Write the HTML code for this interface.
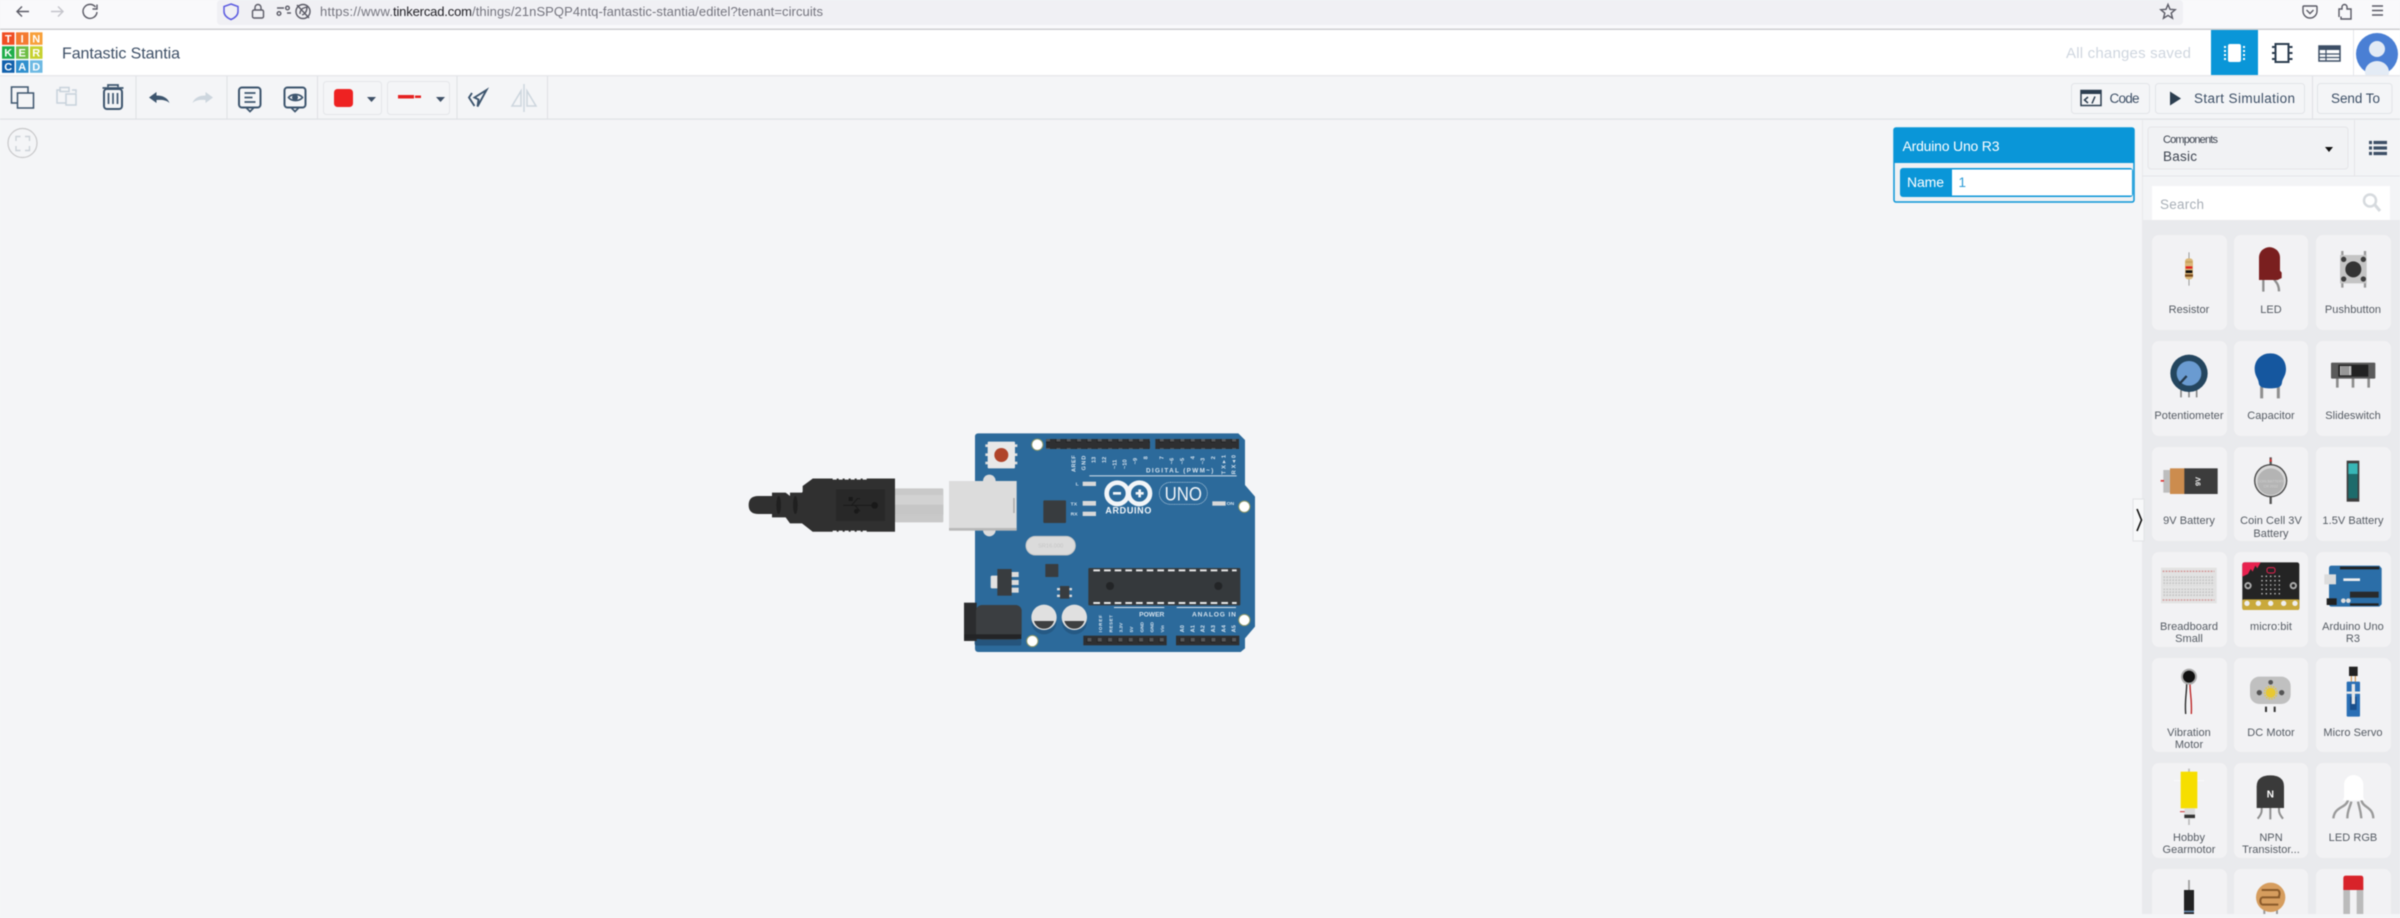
<!DOCTYPE html>
<html><head><meta charset="utf-8"><title>Fantastic Stantia</title>
<style>
html,body{margin:0;padding:0;width:2400px;height:918px;overflow:hidden;background:#f4f5f7}
svg{display:block;filter:blur(.4px)}
text{font-family:"Liberation Sans",sans-serif}
.l{font-size:11px;fill:#555b63;text-anchor:middle;letter-spacing:.05px}
.b{font-size:13.5px;fill:#3d4f66}
.pl{font-size:17px;fill:#d5e2ed;font-weight:bold}
</style></head><body>
<svg width="2400" height="918" viewBox="0 0 2400 918" xmlns="http://www.w3.org/2000/svg">
<defs>
<pattern id="pin" width="31" height="30" patternUnits="userSpaceOnUse"><rect width="31" height="30" fill="#2e2f31"/><rect x="9" y="9" width="13" height="12" fill="#565759"/><path d="M9 9v12h13" fill="none" stroke="#1b1b1c" stroke-width="2"/></pattern>
<pattern id="bb" width="9" height="9" patternUnits="userSpaceOnUse"><rect x="1" y="1" width="5" height="5" fill="#c4c4c4"/></pattern>
</defs>
<rect width="2400" height="918" fill="#f4f5f7"/>
<!-- browser chrome -->
<rect width="2400" height="29" fill="#f9f9fb"/>
<rect x="217" y="0" width="1966" height="25" rx="4" fill="#f0f0f4"/>
<rect y="28.5" width="2400" height="1.5" fill="#cfcfd2"/>
<g fill="none" stroke="#5b5b66" stroke-width="1.4">
<path d="M29 11.5H17M22 6.5l-5 5 5 5"/>
<path d="M63 11.5H51M58 6.5l5 5-5 5" stroke="#c4c4cb"/>
<path d="M95.5 7a7 7 0 1 0 1.500 5M97 4.500v4.500h-4.500"/>
<path d="M231 4l7 2.500v5c0 4-3.500 6.500-7 8-3.500-1.500-7-4-7-8v-5z" stroke="#5a5ae0" stroke-width="1.500"/>
<rect x="252.500" y="10" width="11" height="8" rx="1.500"/><path d="M255 10V7.500a3 3 0 0 1 6 0V10"/>
<path d="M277 8h7M287 13h4M277 13h-.01"/><circle cx="287.500" cy="8" r="1.800"/><circle cx="279" cy="13.500" r="1.800"/>
<circle cx="303" cy="11.500" r="7"/><path d="M297 5l12 13M300 14c0-5 3-6 7-7 0 5-2 7-5 8"/>
<path d="M2168 4.500l2 4.800 5.200.400-4 3.400 1.300 5.100-4.500-2.800-4.500 2.800 1.300-5.100-4-3.400 5.200-.400z"/>
<path d="M2304 6h12a1 1 0 0 1 1 1v4a7 7 0 0 1-14 0V7a1 1 0 0 1 1-1z"/><path d="M2306.500 10l3.500 3.500 3.500-3.500"/>
<path d="M2339 17v-8h3v-2a2.500 2.500 0 0 1 5 0v2h4v10h-10v-2.500"/>
<path d="M2372 6h11M2372 10.500h11M2372 15h11"/>
</g>
<text x="320" y="16" font-size="13" fill="#74747e" textLength="73">https://www.</text>
<text x="393" y="16" font-size="13" fill="#1f1e24" textLength="79">tinkercad.com</text>
<text x="472" y="16" font-size="13" fill="#74747e" textLength="351">/things/21nSPQP4ntq-fantastic-stantia/editel?tenant=circuits</text>

<!-- header -->
<rect y="30" width="2400" height="45" fill="#fff"/>
<rect y="75" width="2400" height="1.500" fill="#e8e9ec"/>
<g font-size="11" font-weight="bold" fill="#fff" text-anchor="middle">
<rect x="2" y="32.300" width="12.500" height="12.500" fill="#f04e23"/><text x="8.200" y="42.500">T</text>
<rect x="16" y="32.300" width="12.500" height="12.500" fill="#f47a30"/><text x="22.200" y="42.500">I</text>
<rect x="30" y="32.300" width="12.500" height="12.500" fill="#f8a03a"/><text x="36.200" y="42.500">N</text>
<rect x="2" y="46.300" width="12.500" height="12.500" fill="#1fae4b"/><text x="8.200" y="56.500">K</text>
<rect x="16" y="46.300" width="12.500" height="12.500" fill="#6ebd44"/><text x="22.200" y="56.500">E</text>
<rect x="30" y="46.300" width="12.500" height="12.500" fill="#c6d12f"/><text x="36.200" y="56.500">R</text>
<rect x="2" y="60.300" width="12.500" height="12.500" fill="#1261ac"/><text x="8.200" y="70.500">C</text>
<rect x="16" y="60.300" width="12.500" height="12.500" fill="#2f8fce"/><text x="22.200" y="70.500">A</text>
<rect x="30" y="60.300" width="12.500" height="12.500" fill="#6db9e3"/><text x="36.200" y="70.500">D</text>
</g>
<text x="62" y="58.500" font-size="16" fill="#3d4f66" textLength="118">Fantastic Stantia</text>
<text x="2066" y="58" font-size="15" fill="#cfd6df" textLength="125">All changes saved</text>
<rect x="2211" y="30" width="47" height="45" fill="#0a96d8"/>
<rect x="2228" y="44" width="13" height="18" rx="2" fill="#fff"/>
<path d="M2225 46v14M2244 46v14" stroke="#fff" stroke-width="2" stroke-dasharray="2 2"/>
<rect x="2275.500" y="44" width="13" height="18" fill="none" stroke="#2c3e50" stroke-width="2"/>
<path d="M2272 47h3.500M2272 53h3.500M2272 59h3.500M2289 47h3.500M2289 53h3.500M2289 59h3.500" stroke="#2c3e50" stroke-width="2"/>
<rect x="2319" y="46" width="21" height="15" fill="#fff" stroke="#3d4f66" stroke-width="1.500"/>
<rect x="2319" y="46" width="21" height="4" fill="#3d4f66"/>
<path d="M2319 54h21M2319 57.500h21M2326 50v11" stroke="#3d4f66" stroke-width="1.200"/>
<rect x="2353" y="30" width="1" height="45" fill="#e4e6ea"/>
<clipPath id="av"><rect x="2354" y="30" width="46" height="45"/></clipPath>
<g clip-path="url(#av)"><circle cx="2377" cy="54" r="21" fill="#4a7fd4"/><circle cx="2377" cy="49" r="8" fill="#e3ebf5"/><ellipse cx="2377" cy="72" rx="12" ry="11" fill="#e3ebf5"/></g>

<!-- toolbar -->
<rect y="118.500" width="2400" height="1.200" fill="#dfe1e5"/>
<g fill="#dfe1e5"><rect x="135.500" y="76" width="1" height="43"/><rect x="226.500" y="76" width="1" height="43"/><rect x="317" y="76" width="1" height="43"/><rect x="456.500" y="76" width="1" height="43"/><rect x="547" y="76" width="1" height="43"/><rect x="2312" y="76" width="1" height="43"/></g>
<g fill="none" stroke="#3d556e" stroke-width="1.500">
<path d="M17 103h-5.500V87H28v6"/><rect x="17.500" y="93" width="16" height="15"/>
<g stroke="#c8d2db"><path d="M66 103H57V90h4M72 90h4v3"/><rect x="60" y="87.500" width="9" height="4"/><rect x="66" y="94" width="10" height="11"/></g>
<rect x="104" y="89" width="18" height="20" rx="3" stroke-width="2"/><path d="M102.500 88h21M108 87v-2h10v2M108.500 93v11M113 93v11M117.500 93v11" stroke-width="1.700"/>
<rect x="239" y="87.500" width="21.500" height="20" rx="3" stroke-width="2"/><path d="M246 107.500l4 4 4-4M244.500 93h11M244.500 97.500h8M244.500 102h11" stroke-width="1.700"/>
<rect x="284.500" y="87.500" width="21" height="20" rx="3" stroke-width="2"/><path d="M291 107.500l4 4 4-4" stroke-width="1.700"/>
<path d="M288.500 97.500c3-4 11-4 14 0-3 4-11 4-14 0z" stroke-width="1.700"/>
<path d="M486.500 90L474.500 97.500 478.500 99.500 477.500 106.500Z" stroke-width="1.900"/>
<path d="M472 93l-3 4.500 5.500 8.500" stroke-width="1.900"/>
<g stroke="#cdd6de"><path d="M524 84v28"/><path d="M521 91v15h-9zM527 91v15h9z"/></g>
</g>
<circle cx="295" cy="97.500" r="3" fill="#3d556e"/>
<path d="M149 97.500l7.500-5.500v3.500c6 0 11 2 13 7.500-3-3-8-3.500-13-3v3z" fill="#3d556e"/>
<path d="M213 97.500l-7.500-5.500v3.500c-6 0-11 2-13 7.500 3-3 8-3.500 13-3v3z" fill="#cdd6de"/>
<rect x="323.500" y="81.500" width="58" height="33" rx="3" fill="#f4f5f7" stroke="#e4e6e9"/>
<rect x="387.500" y="81.500" width="62" height="33" rx="3" fill="#f4f5f7" stroke="#e4e6e9"/>
<rect x="334" y="89" width="19" height="18" rx="3.500" fill="#ee2222"/>
<path d="M367 97h9l-4.500 5zM436 97h9l-4.500 5z" fill="#3d4f66"/>
<rect x="398" y="95" width="16" height="3.500" fill="#e52222"/><rect x="415" y="95.500" width="6" height="2.500" fill="#e52222"/>
<g fill="#f4f5f7" stroke="#e2e4e8"><rect x="2071.500" y="83.500" width="78" height="30" rx="3"/><rect x="2155.500" y="83.500" width="149" height="30" rx="3"/><rect x="2317.500" y="83.500" width="74.500" height="30" rx="3"/></g>
<rect x="2081" y="90.500" width="20" height="15" fill="none" stroke="#2c3e50" stroke-width="1.500"/><rect x="2081" y="90" width="20" height="4" fill="#2c3e50"/>
<path d="M2088 97l-3.500 3 3.500 3M2095 96.500l-3 7" fill="none" stroke="#2c3e50" stroke-width="1.500"/>
<text x="2109.500" y="103" class="b" textLength="30">Code</text>
<path d="M2170 91.500l11 7-11 7z" fill="#2c3e50"/>
<text x="2194" y="103" class="b" textLength="101">Start Simulation</text>
<text x="2331" y="103" class="b" textLength="49">Send To</text>

<!-- fit button -->
<circle cx="22.500" cy="143" r="14.500" fill="#f4f5f7" stroke="#c8c8ca" stroke-width="1.200"/>
<path d="M16 141v-4.500h4.500M25 136.500h4.500v4.500M29.500 146v4.500H25M20.500 150.500H16V146" fill="none" stroke="#ccd2d8" stroke-width="1.400"/>

<!-- Board -->
<g transform="translate(960 425) scale(.33333)">
<path d="M55 25H835L855 45V180L885 215V605L855 640V670L842 681H55Q45 681 45 671V35Q45 25 55 25Z" fill="#2c6a9b"/>
<rect x="258" y="42" width="312" height="30" fill="url(#pin)"/>
<rect x="586" y="42" width="251" height="30" fill="url(#pin)"/>
<rect x="370" y="632" width="250" height="29" fill="url(#pin)"/>
<rect x="648" y="632" width="190" height="29" fill="url(#pin)"/>
<g fill="#fff" stroke="#8a9566" stroke-width="3"><circle cx="232" cy="59" r="17"/><circle cx="853" cy="245" r="17"/><circle cx="853" cy="585" r="17"/><circle cx="217" cy="648" r="17"/></g>
<rect x="76" y="58" width="96" height="8" fill="#ddd"/><rect x="76" y="85" width="96" height="8" fill="#ddd"/><rect x="76" y="110" width="96" height="8" fill="#ddd"/>
<rect x="83" y="50" width="82" height="80" rx="3" fill="#e8e8e8"/><circle cx="124" cy="90" r="21" fill="#b0442a"/>
<g fill="#d9d9d9"><rect x="368" y="170" width="40" height="13"/><rect x="368" y="228" width="40" height="14"/><rect x="368" y="260" width="40" height="13"/><rect x="757" y="229" width="40" height="13"/></g>
<g font-size="15" font-weight="bold" fill="#d5e2ed"><text x="347" y="182">L</text><text x="332" y="241">TX</text><text x="332" y="272">RX</text><text x="800" y="240">ON</text></g>
<rect x="250" y="226" width="68" height="68" rx="3" fill="#383c3f"/>
<rect x="198" y="334" width="148" height="56" rx="28" fill="#dbdbdb" stroke="#c6c6c6" stroke-width="3"/>
<text x="272" y="368" font-size="17" fill="#c4c4c4" text-anchor="middle">SR16.000</text>
<rect x="256" y="417" width="39" height="39" rx="2" fill="#383c3f"/>
<rect x="92" y="452" width="24" height="38" rx="4" fill="#e2e2e2"/>
<g fill="#dcdcdc"><rect x="152" y="441" width="24" height="15"/><rect x="152" y="465" width="24" height="15"/><rect x="152" y="488" width="24" height="15"/></g>
<rect x="112" y="432" width="43" height="80" fill="#383c3f"/>
<g fill="#dcdcdc"><rect x="291" y="489" width="10" height="7"/><rect x="291" y="509" width="10" height="7"/><rect x="326" y="489" width="10" height="7"/><rect x="326" y="509" width="10" height="7"/></g>
<rect x="300" y="483" width="28" height="38" fill="#383c3f"/>
<rect x="385" y="429" width="456" height="112" rx="3" fill="#35393c"/>
<path d="M400 436H830M400 534H830" stroke="#e8e8e8" stroke-width="6" stroke-dasharray="20 12"/>
<circle cx="450" cy="483" r="12" fill="#232527"/><circle cx="775" cy="483" r="12" fill="#232527"/>
<!-- logo -->
<circle cx="472" cy="205" r="32" fill="none" stroke="#f2f5f8" stroke-width="14"/><circle cx="538" cy="205" r="32" fill="none" stroke="#f2f5f8" stroke-width="14"/>
<rect x="459" y="201" width="24" height="8" fill="#f2f5f8"/><path d="M527 205h24M539 193v24" stroke="#f2f5f8" stroke-width="8"/>
<text x="505" y="266" font-size="27" font-weight="bold" fill="#f2f5f8" text-anchor="middle" textLength="138">ARDUINO</text>
<rect x="598" y="172" width="144" height="66" rx="33" fill="none" stroke="#d5e2ed" stroke-width="2" stroke-dasharray="3 2"/>
<text x="670" y="226" font-size="58" fill="#f0f4f8" text-anchor="middle" textLength="112" lengthAdjust="spacingAndGlyphs">UNO</text>
<!-- labels -->
<g class="pl">
<text class="pl" transform="translate(346 141) rotate(-90)" textLength="50">AREF</text>
<text class="pl" transform="translate(376 136) rotate(-90)" textLength="44">GND</text>
<text class="pl" transform="translate(407 114) rotate(-90)">13</text>
<text class="pl" transform="translate(438 114) rotate(-90)">12</text>
<text class="pl" transform="translate(469 132) rotate(-90)">~11</text>
<text class="pl" transform="translate(500 132) rotate(-90)">~10</text>
<text class="pl" transform="translate(531 118) rotate(-90)">~9</text>
<text class="pl" transform="translate(562 103) rotate(-90)">8</text>
<text class="pl" transform="translate(610 103) rotate(-90)">7</text>
<text class="pl" transform="translate(641 118) rotate(-90)">~6</text>
<text class="pl" transform="translate(672 118) rotate(-90)">~5</text>
<text class="pl" transform="translate(703 103) rotate(-90)">4</text>
<text class="pl" transform="translate(734 118) rotate(-90)">~3</text>
<text class="pl" transform="translate(765 103) rotate(-90)">2</text>
<text class="pl" transform="translate(796 148) rotate(-90)" textLength="58">TX▸1</text>
<text class="pl" transform="translate(827 148) rotate(-90)" textLength="58">RX◂0</text>
<text class="pl" transform="translate(426 622) rotate(-90)" style="font-size:14px" textLength="52">IOREF</text>
<text class="pl" transform="translate(457 622) rotate(-90)" style="font-size:14px" textLength="52">RESET</text>
<text class="pl" transform="translate(488 622) rotate(-90)" style="font-size:14px">3.3V</text>
<text class="pl" transform="translate(519 622) rotate(-90)" style="font-size:14px">5V</text>
<text class="pl" transform="translate(550 622) rotate(-90)" style="font-size:14px">GND</text>
<text class="pl" transform="translate(581 622) rotate(-90)" style="font-size:14px">GND</text>
<text class="pl" transform="translate(612 622) rotate(-90)" style="font-size:14px">Vin</text>
<text class="pl" transform="translate(672 622) rotate(-90)">A0</text>
<text class="pl" transform="translate(703 622) rotate(-90)">A1</text>
<text class="pl" transform="translate(734 622) rotate(-90)">A2</text>
<text class="pl" transform="translate(765 622) rotate(-90)">A3</text>
<text class="pl" transform="translate(796 622) rotate(-90)">A4</text>
<text class="pl" transform="translate(827 622) rotate(-90)">A5</text>
</g>
<text x="558" y="142" class="pl" style="font-size:19px" textLength="202">DIGITAL (PWM~)</text>
<rect x="388" y="151" width="442" height="3" fill="#d5e2ed"/>
<rect x="462" y="546" width="151" height="3" fill="#d5e2ed"/><rect x="650" y="546" width="178" height="3" fill="#d5e2ed"/>
<text x="613" y="574" class="pl" style="font-size:20px" text-anchor="end">POWER</text>
<text x="828" y="574" class="pl" style="font-size:20px" text-anchor="end" textLength="132">ANALOG IN</text>
<!-- caps -->
<circle cx="252" cy="590" r="38" fill="#22537a" opacity=".7"/><circle cx="343" cy="590" r="38" fill="#22537a" opacity=".7"/>
<circle cx="252" cy="577" r="38" fill="#e0e0e0"/><circle cx="343" cy="577" r="38" fill="#e0e0e0"/>
<path d="M222 588H282A31 31 0 0 1 222 588ZM313 588H373A31 31 0 0 1 313 588Z" fill="#3d3f41"/>
<!-- jack -->
<rect x="44" y="600" width="140" height="62" rx="6" fill="#25547c"/>
<rect x="12" y="533" width="38" height="115" fill="#2b2c2e"/>
<rect x="48" y="540" width="137" height="104" rx="18" fill="#3b3e41"/>
<rect x="12" y="628" width="172" height="14" fill="#232426"/>
<!-- USB block -->
<circle cx="88" cy="168" r="19" fill="#dcdcdc"/><circle cx="88" cy="315" r="19" fill="#dcdcdc"/>
<rect x="-33" y="168" width="203" height="146" fill="#dcdcdc"/>
<rect x="-33" y="313" width="203" height="4" fill="#b8b8b8"/>
<rect x="160" y="220" width="4" height="44" fill="#a5a5a5"/>
</g>
<g transform="translate(740 470) scale(.33333)">
<rect x="465" y="55" width="145" height="102" rx="3" fill="#c9c9c9"/>
<rect x="465" y="75" width="145" height="30" fill="#d2d2d2"/>
<rect x="465" y="104" width="145" height="30" fill="#c6c6c6"/>
<path d="M26 105Q26 78 55 78H96V68H137L150 78V68H186L218 26H275V26H465V185H218L186 160H150L137 142H96V132H55Q26 132 26 105Z" fill="#303030"/>
<path d="M188 48L218 26H465V185H218L188 160Z" fill="#303030"/>
<path d="M278 26h12M296 26h12M314 26h12M332 26h12M350 26h12M368 26h12M278 185h12M296 185h12M314 185h12M332 185h12M350 185h12M368 185h12" stroke="#f4f5f7" stroke-width="6"/>
<rect x="288" y="58" width="147" height="95" fill="#282828"/>
<ellipse cx="116" cy="105" rx="7" ry="27" fill="#202020"/><ellipse cx="166" cy="105" rx="7" ry="27" fill="#202020"/>
<path d="M310 106H405M335 106L352 86H360M345 106L360 124" fill="none" stroke="#191919" stroke-width="3"/>
<circle cx="404" cy="106" r="10" fill="#191919"/><rect x="326" y="81" width="12" height="12" fill="#191919"/><circle cx="349" cy="124" r="7" fill="#191919"/>
</g>
<rect x="949" y="481" width="67.500" height="48" fill="#dcdcdc"/>
<rect x="949" y="528" width="67.500" height="2" fill="#b8b8b8"/>
<rect x="1013.300" y="498" width="1.300" height="15" fill="#a5a5a5"/>

<!-- Inspector -->
<rect x="1894" y="128" width="240" height="74" rx="2" fill="#f0f1f3" stroke="#0a96d8" stroke-width="1.500"/>
<path d="M1894 163V130a2 2 0 0 1 2-2h236a2 2 0 0 1 2 2v33z" fill="#0a96d8"/>
<rect x="1900" y="168" width="233" height="29" rx="3" fill="#0a96d8"/>
<rect x="1952" y="169.500" width="180" height="26" fill="#fff"/>
<text x="1902.500" y="151" font-size="14" fill="#fff" textLength="97">Arduino Uno R3</text>
<text x="1907" y="187" font-size="14" fill="#fff" textLength="37">Name</text>
<text x="1958.500" y="187" font-size="13.500" fill="#2a9ad6">1</text>

<!-- Sidebar -->
<rect x="2142" y="120" width="258" height="100" fill="#f3f4f6"/>
<rect x="2142" y="120" width="1" height="100" fill="#e8e9ec"/>
<rect x="2148" y="127" width="200" height="42" rx="3" fill="#f1f2f4" stroke="#e4e5e8"/>
<text x="2163" y="143" font-size="11" fill="#3d4450" textLength="55">Components</text>
<text x="2163" y="161" font-size="13.500" fill="#3d4450" textLength="34">Basic</text>
<path d="M2325 147h8l-4 5z" fill="#111"/>
<rect x="2354" y="120" width="1" height="56" fill="#e4e5e8"/>
<rect x="2142" y="175.500" width="258" height="1" fill="#e4e5e8"/>
<path d="M2369 142.500h18M2369 148h18M2369 153.500h18" stroke="#3d4f66" stroke-width="3.200" stroke-dasharray="3 1.500 14"/>
<rect x="2152" y="186" width="238" height="34" fill="#fff"/>
<text x="2160" y="209" font-size="13.500" fill="#a9b0b8" textLength="44">Search</text>
<circle cx="2370" cy="200.500" r="6" fill="none" stroke="#d6dade" stroke-width="2.500"/><path d="M2375 205l5 6" stroke="#d6dade" stroke-width="3"/>
<rect x="2142" y="220" width="258" height="698" fill="#e9eaed"/>
<g fill="#f2f2f4">
<rect x="2152" y="235" width="75" height="95" rx="7"/><rect x="2234" y="235" width="74" height="95" rx="7"/><rect x="2316" y="235" width="75" height="95" rx="7"/>
<rect x="2152" y="341" width="75" height="95" rx="7"/><rect x="2234" y="341" width="74" height="95" rx="7"/><rect x="2316" y="341" width="75" height="95" rx="7"/>
<rect x="2152" y="447" width="75" height="94" rx="7"/><rect x="2234" y="447" width="74" height="94" rx="7"/><rect x="2316" y="447" width="75" height="94" rx="7"/>
<rect x="2152" y="552" width="75" height="95" rx="7"/><rect x="2234" y="552" width="74" height="95" rx="7"/><rect x="2316" y="552" width="75" height="95" rx="7"/>
<rect x="2152" y="658" width="75" height="94" rx="7"/><rect x="2234" y="658" width="74" height="94" rx="7"/><rect x="2316" y="658" width="75" height="94" rx="7"/>
<rect x="2152" y="763" width="75" height="95" rx="7"/><rect x="2234" y="763" width="74" height="95" rx="7"/><rect x="2316" y="763" width="75" height="95" rx="7"/>
<rect x="2152" y="869" width="75" height="60" rx="7"/><rect x="2234" y="869" width="74" height="60" rx="7"/><rect x="2316" y="869" width="75" height="60" rx="7"/>
</g>
<!-- labels -->
<text class="l" x="2189" y="313">Resistor</text><text class="l" x="2271" y="313">LED</text><text class="l" x="2353" y="313">Pushbutton</text>
<text class="l" x="2189" y="419">Potentiometer</text><text class="l" x="2271" y="419">Capacitor</text><text class="l" x="2353" y="419">Slideswitch</text>
<text class="l" x="2189" y="524">9V Battery</text><text class="l" x="2271" y="524">Coin Cell 3V</text><text class="l" x="2271" y="537">Battery</text><text class="l" x="2353" y="524">1.5V Battery</text>
<text class="l" x="2189" y="630">Breadboard</text><text class="l" x="2189" y="642">Small</text><text class="l" x="2271" y="630">micro:bit</text><text class="l" x="2353" y="630">Arduino Uno</text><text class="l" x="2353" y="642">R3</text>
<text class="l" x="2189" y="736">Vibration</text><text class="l" x="2189" y="748">Motor</text><text class="l" x="2271" y="736">DC Motor</text><text class="l" x="2353" y="736">Micro Servo</text>
<text class="l" x="2189" y="841">Hobby</text><text class="l" x="2189" y="853">Gearmotor</text><text class="l" x="2271" y="841">NPN</text><text class="l" x="2271" y="853">Transistor...</text><text class="l" x="2353" y="841">LED RGB</text>
<!-- icons rows 1-3 -->
<g transform="translate(2130 220) scale(.33333)">
<path d="M177 97v100" stroke="#9a9a9a" stroke-width="3"/>
<rect x="165" y="115" width="24" height="63" rx="9" fill="#dcb878"/>
<rect x="167" y="123" width="20" height="6" fill="#c9a35f"/><rect x="167" y="139" width="20" height="7" fill="#e02020"/><rect x="167" y="151" width="20" height="8" fill="#111"/><rect x="165" y="163" width="24" height="7" fill="#7a4a1c"/>
<path d="M400 175v40M432 178c6 8 15 15 15 36" fill="none" stroke="#8f8f8f" stroke-width="7"/>
<path d="M387 112a31 30 0 0 1 63 0v40l5 6v16l-12 6h-56v-12z" fill="#7a1f1f"/>
<path d="M637 93v110M705 93v110" stroke="#999" stroke-width="7"/>
<rect x="630" y="105" width="80" height="85" fill="#c4c4c4"/>
<circle cx="670" cy="148" r="24" fill="#333"/><g fill="#3d3d3d"><circle cx="641" cy="118" r="8"/><circle cx="700" cy="118" r="8"/><circle cx="641" cy="177" r="8"/><circle cx="700" cy="177" r="8"/></g>
<path d="M153 510v22M177 510v22M200 510v22" stroke="#888" stroke-width="5"/>
<circle cx="177" cy="460" r="56" fill="#24465f"/><circle cx="177" cy="460" r="37" fill="#6a9bd1"/>
<path d="M148 492L170 468" stroke="#24384a" stroke-width="7"/>
<path d="M395 500v35M445 500v35" stroke="#8f8f8f" stroke-width="9"/>
<path d="M421 400c28 0 47 20 47 47 0 20-10 27-12 40-1 12-8 18-35 18s-34-6-35-18c-2-13-12-20-12-40 0-27 19-47 47-47z" fill="#15579f"/>
<path d="M622 470v33M669 470v33M716 470v33" stroke="#8d8d8d" stroke-width="8"/>
<rect x="603" y="428" width="133" height="48" rx="3" fill="#5a5a5a"/><rect x="625" y="434" width="90" height="36" fill="#222"/><rect x="630" y="438" width="34" height="28" fill="#bbb"/>
<path d="M636 438v28M642 438v28M648 438v28M654 438v28" stroke="#555" stroke-width="2"/>
<rect x="100" y="750" width="22" height="68" fill="#bdbdbd"/><rect x="92" y="780" width="10" height="5" fill="#d33"/>
<rect x="120" y="745" width="45" height="77" fill="#cc8c4e"/><rect x="163" y="745" width="100" height="77" fill="#3c3c3c"/>
<text transform="translate(212 798) rotate(-90)" font-size="22" font-weight="bold" fill="#eee">9V</text>
<path d="M422 712v140" stroke="#555" stroke-width="7"/><path d="M418 725l4-12 4 12z" fill="#d33"/>
<circle cx="422" cy="782" r="50" fill="#484848"/><circle cx="422" cy="782" r="46" fill="#d8d8d8"/><circle cx="422" cy="785" r="40" fill="#b4b4b4"/>
<text x="422" y="788" font-size="11" fill="#d0d0d0" text-anchor="middle">COIN BATTERY</text><text x="422" y="802" font-size="11" fill="#d0d0d0" text-anchor="middle">CR 2032</text>
<rect x="650" y="722" width="38" height="123" fill="#3d3d3d"/><rect x="655" y="730" width="28" height="32" fill="#38b6b6"/><rect x="655" y="762" width="28" height="73" fill="#1d6b6b"/>
</g>
<!-- icons rows 4-7 -->
<clipPath id="side"><rect x="2142" y="530" width="258" height="384"/></clipPath>
<g clip-path="url(#side)"><g transform="translate(2130 540) scale(.33333)">
<rect x="93" y="83" width="167" height="107" fill="#e2e2e2"/><rect x="100" y="105" width="153" height="32" fill="url(#bb)"/><rect x="100" y="146" width="153" height="22" fill="url(#bb)"/>
<path d="M98 94h155M98 180h155" stroke="#d28f8f" stroke-width="4" stroke-dasharray="5 4"/>
<rect x="337" y="67" width="171" height="143" rx="7" fill="#242424"/>
<path d="M337 110V74q0-7 7-7h48l-10 18-6-8-8 18-6-8-8 15z" fill="#e8214f"/>
<rect x="337" y="178" width="171" height="32" rx="5" fill="#c9a93b"/>
<g fill="#eee"><circle cx="351" cy="190" r="8"/><circle cx="385" cy="190" r="8"/><circle cx="422" cy="190" r="8"/><circle cx="461" cy="190" r="8"/><circle cx="495" cy="190" r="8"/></g>
<rect x="411" y="83" width="24" height="16" rx="6" fill="none" stroke="#e8214f" stroke-width="3"/>
<path d="M396 107v65M409 107v65M422 107v65M435 107v65M448 107v65" stroke="#ccc" stroke-width="4" stroke-dasharray="4 9"/>
<circle cx="354" cy="137" r="11" fill="#aaa"/><circle cx="490" cy="137" r="11" fill="#aaa"/><circle cx="354" cy="137" r="5" fill="#222"/><circle cx="490" cy="137" r="5" fill="#222"/>
<path d="M597 85q0-8 8-8h143l7 8v108l-7 7H605q-8 0-8-8z" fill="#2b6ea8"/>
<rect x="630" y="80" width="118" height="8" fill="#222"/><rect x="660" y="155" width="86" height="18" fill="#282a2c"/><rect x="660" y="190" width="86" height="7" fill="#222"/>
<rect x="583" y="103" width="35" height="30" fill="#dcdcdc"/><rect x="590" y="175" width="30" height="20" fill="#222"/>
<rect x="640" y="115" width="50" height="8" fill="#eee"/><circle cx="640" cy="182" r="7" fill="#ddd"/><circle cx="655" cy="182" r="7" fill="#ddd"/>
<path d="M170 432c0 30-6 45-3 90" fill="none" stroke="#222" stroke-width="4"/><path d="M180 432c0 30 6 45 4 90" fill="none" stroke="#b22" stroke-width="4"/>
<circle cx="177" cy="410" r="24" fill="#aaa"/><circle cx="177" cy="410" r="18" fill="#111"/>
<path d="M408 500v16M434 500v16" stroke="#333" stroke-width="6"/>
<rect x="360" y="410" width="122" height="82" rx="28" fill="#c0c0c0"/>
<g fill="#555"><circle cx="388" cy="458" r="8"/><circle cx="455" cy="458" r="8"/><circle cx="422" cy="427" r="7"/></g>
<circle cx="422" cy="458" r="15" fill="#e8c832"/><circle cx="422" cy="458" r="19" fill="none" stroke="#e8c832" stroke-width="4" stroke-dasharray="4 4"/>
<rect x="657" y="380" width="26" height="28" fill="#222"/><path d="M664 408v18M676 408v18" stroke="#c83" stroke-width="3"/>
<rect x="650" y="425" width="40" height="105" rx="3" fill="#2a6fb5"/><rect x="660" y="470" width="20" height="40" fill="#1a4f8c"/>
<path d="M650 458h40" stroke="#e8e8e8" stroke-width="7"/><path d="M670 432v60" stroke="#e8e8e8" stroke-width="10"/>
<path d="M132 722h90" stroke="#fff" stroke-width="2"/><path d="M177 686v30M177 835v20" stroke="#bbb" stroke-width="5"/>
<rect x="152" y="695" width="50" height="110" fill="#f6de00"/><rect x="163" y="805" width="32" height="32" fill="#ddd"/><rect x="163" y="824" width="32" height="10" fill="#333"/><path d="M150 815h14" stroke="#c33" stroke-width="3"/>
<path d="M395 800v12q0 10-12 24M421 800v38M447 800v12q0 10 12 24" fill="none" stroke="#8f8f8f" stroke-width="6"/>
<path d="M380 740q0-34 41-34t41 34v64h-82z" fill="#3a3a3a"/>
<text x="421" y="773" font-size="30" font-weight="bold" fill="#fff" text-anchor="middle">N</text>
<path d="M654 780c-5 25-40 18-44 55M664 785c-3 15-12 25-12 50M684 785c3 15 8 25 10 50M694 780c5 25 34 18 36 55" fill="none" stroke="#9a9a9a" stroke-width="7"/>
<path d="M642 735a29 30 0 0 1 58 0v38l5 8H638l4-8z" fill="#fff"/>
<path d="M177 1020v30" stroke="#999" stroke-width="5"/><rect x="162" y="1050" width="30" height="80" fill="#222"/><rect x="162" y="1112" width="30" height="5" fill="#68a"/>
<path d="M403 1110v20M441 1110v20" stroke="#999" stroke-width="6"/>
<circle cx="422" cy="1072" r="44" fill="#d69d5e"/><path d="M395 1050h50M395 1072h55M395 1094h50M445 1050q8 11 0 22M395 1072q-8 11 0 22" fill="none" stroke="#8a5a2a" stroke-width="6"/>
<path d="M650 1040v90M690 1040v90" stroke="#bbb" stroke-width="20"/>
<path d="M640 1015q0-8 8-8h44q8 0 8 8v35h-60z" fill="#d8232a"/>
</g></g>
<rect x="2142" y="914" width="258" height="4" fill="#f4f5f7"/>
<!-- side toggle -->
<rect x="2133" y="499" width="11" height="42" fill="#f7f8f9" stroke="#e2e3e6"/>
<path d="M2137 509l4.500 11-4.500 11" fill="none" stroke="#111" stroke-width="1.600"/>
</svg>
</body></html>
